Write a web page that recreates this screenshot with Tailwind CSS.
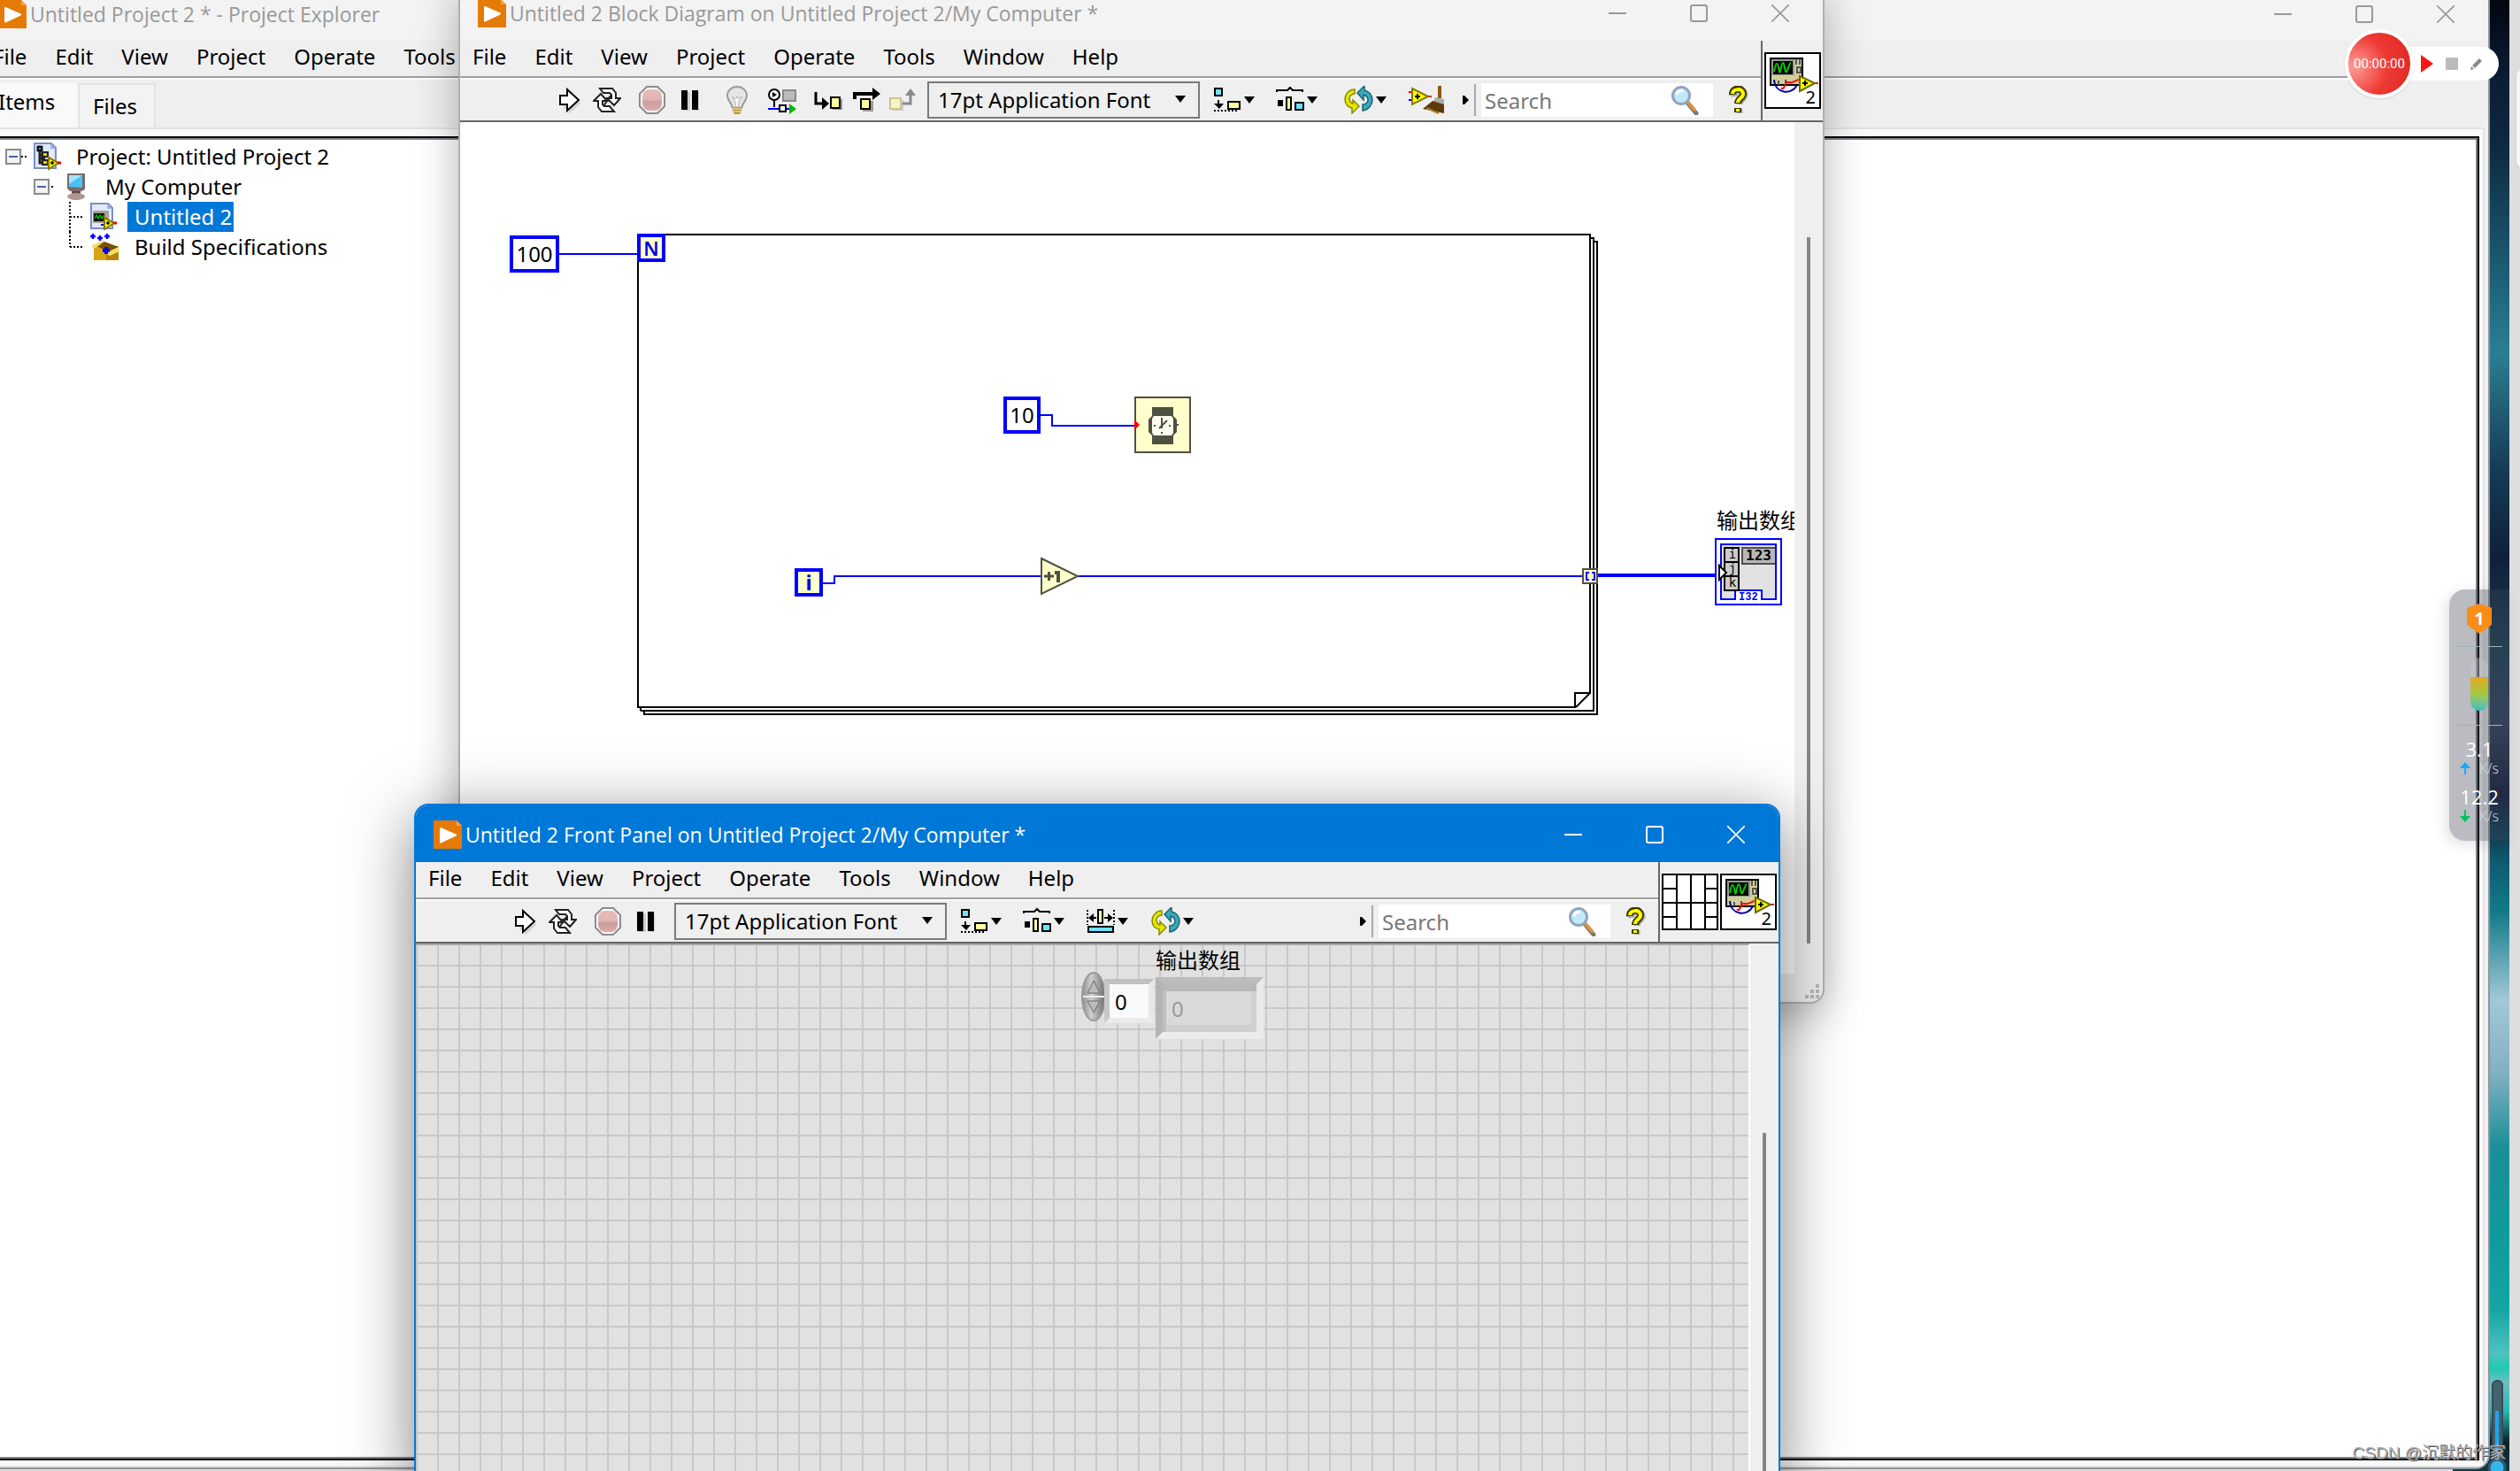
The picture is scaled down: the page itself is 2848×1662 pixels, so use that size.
<!DOCTYPE html>
<html lang="en">
<head>
<meta charset="utf-8">
<meta name="viewport" content="width=device-width, initial-scale=1">
<title>Untitled Project 2</title>
<script src="https://cdn.jsdelivr.net/npm/@tailwindcss/browser@4"></script>
</head>
<body class="relative h-screen overflow-hidden bg-[#dedede] font-['Noto_Sans','Noto_Sans_CJK_SC',sans-serif] text-2xl leading-8 text-black">

<!-- Shared icons -->
<svg class="absolute size-0" aria-hidden="true">
  <symbol id="app" viewBox="0 0 32 32"><path fill="#e67a06" d="M0 0h26l6 6v26H0z"/><path fill="#f4a14b" d="M26 0l6 6h-6z"/><path fill="#fff" stroke="#fff" stroke-width="2" stroke-linejoin="round" d="M8 9l17 7.500-17 8z"/></symbol>
  <symbol id="min" viewBox="0 0 20 20"><path d="M0 10h20" stroke="currentColor" stroke-width="2"/></symbol>
  <symbol id="max" viewBox="0 0 20 20"><rect x="1" y="1" width="18" height="18" rx="2" fill="none" stroke="currentColor" stroke-width="2"/></symbol>
  <symbol id="close" viewBox="0 0 20 20"><path d="M0 0l20 20M20 0L0 20" stroke="currentColor" stroke-width="1.600"/></symbol>
  <symbol id="run" viewBox="0 0 24 32"><path d="M5 14v12h6v6l14-13" fill="#bbb" opacity=".5"/><path d="M1 11h8V4l13 12L9 28v-7H1z" fill="#fff" stroke="#000" stroke-width="2"/></symbol>
  <symbol id="loop" viewBox="0 0 32 32"><g fill="#fff" stroke="#222" stroke-width="2"><path d="M8 3h14l4 5v6h5l-7 8-8-8h5v-4l-2-2H12z"/><path d="M24 29H10l-4-5v-7H1l8-8 7 8h-5v4l2 2h6z"/></g><path d="M12 23l8-12" stroke="#222" stroke-width="2"/></symbol>
  <linearGradient id="sg" x2="0" y2="1"><stop stop-color="#e8b9b9"/><stop offset=".5" stop-color="#e0b5b5"/><stop offset=".55" stop-color="#cc9d9d"/><stop offset="1" stop-color="#dba9a9"/></linearGradient>
  <symbol id="stop" viewBox="0 0 30 32"><path d="M9 1h12l8 8v14l-8 8H9l-8-8V9z" fill="#fff" stroke="#8c8c8c" stroke-width="2"/><rect x="4" y="4" width="22" height="24" rx="8" fill="url(#sg)"/></symbol>
  <symbol id="pause" viewBox="0 0 20 32"><path d="M2 7h8v21H2zM14 7h7v21h-7z" fill="#ccc"/><path d="M0 5h7v22H0zM12 5h7v22h-7z"/></symbol>
  <symbol id="bulb" viewBox="0 0 26 32"><path d="M13 1C6 1 2 6 2 11c0 6 5 8 6 14h10c1-6 6-8 6-14 0-5-4-10-11-10z" fill="#e6e6e6" stroke="#9a9a9a" stroke-width="2"/><path d="M8 12c0 4 3 3 3 8v4h4v-4c0-5 3-4 3-8-2 3-4 3-5 0-1 3-3 3-5 0z" fill="#fafafa" stroke="#aaa"/><path d="M8 24h10v5l-2 3h-6l-2-3z" fill="#b59a3d"/><path d="M8 26h10M8 29h10" stroke="#e9d489" stroke-width="1.500"/></symbol>
  <symbol id="retain" viewBox="0 0 32 32"><circle cx="7" cy="10" r="6" fill="#fff" stroke="#000" stroke-width="2"/><path d="M5 7l5 3-5 3z"/><path d="M7 16v8" stroke="#000" stroke-width="2"/><path d="M17 5h14v12H17z" fill="#bbb" stroke="#888" stroke-width="2"/><path d="M0 26h13M20 26h6" stroke="#00f" stroke-width="2"/><path d="M13 22h7v7h-7z" fill="#fff" stroke="#000" stroke-width="2"/><path d="M24 20l8 6-8 6z" fill="#0b0"/></symbol>
  <symbol id="into" viewBox="0 0 32 32"><path d="M2 7v13h8" fill="none" stroke="#000" stroke-width="3"/><path d="M9 13l8 7-8 7z"/><path d="M21 15h11v12H21z" fill="#999"/><path d="M19 13h10v12H19z" fill="#ffff9e" stroke="#000" stroke-width="2"/></symbol>
  <symbol id="over" viewBox="0 0 32 32"><path d="M2 15V9h22" fill="none" stroke="#000" stroke-width="4"/><path d="M22 2l9 7-9 7z"/><path d="M11 17h12v12H11z" fill="#999"/><path d="M9 15h10v11H9z" fill="#ffff9e" stroke="#000" stroke-width="2"/></symbol>
  <symbol id="out" viewBox="0 0 32 32"><path d="M4 16h13v12H4z" fill="#ccc"/><path d="M2 14h12v12H2z" fill="#f5f5c8" stroke="#c8c88c" stroke-width="2"/><path d="M16 20h9V9" fill="none" stroke="#8a8a8a" stroke-width="3"/><path d="M19 11l6-8 6 8z" fill="#8a8a8a"/></symbol>
  <symbol id="align" viewBox="0 0 46 32"><path d="M1 3h8v8H1z" fill="#6fe0ff" stroke="#000" stroke-width="2"/><path d="M5 16v6" stroke="#000" stroke-width="2"/><path d="M0 20h11l-5 6z"/><path d="M16 18h13v8H16z" fill="#ffffa0" stroke="#000" stroke-width="2"/><path d="M0 28h28" stroke="#000" stroke-width="2" stroke-dasharray="2 2"/><path d="M34 12h12l-6 8z"/></symbol>
  <symbol id="dist" viewBox="0 0 48 32"><path d="M1 7V5h12l3-3 3 3h11v2" fill="none" stroke="#000" stroke-width="2"/><path d="M2 16h6v7H2z"/><path d="M12 13h5v14h-5z" fill="#ffffa0" stroke="#000" stroke-width="2"/><path d="M22 19h9v8h-9z" fill="#6fe0ff" stroke="#000" stroke-width="2"/><path d="M35 12h12l-6 8z"/></symbol>
  <symbol id="resize" viewBox="0 0 48 32"><path d="M1 3v17M31 3v17" stroke="#000" stroke-width="2" stroke-dasharray="2 2"/><path d="M3 12h8M20 12h9" stroke="#000" stroke-width="2"/><path d="M8 7l-6 5 6 5zM24 7l6 5-6 5z"/><path d="M13 3h5v15h-5z" fill="#ffffa0" stroke="#000" stroke-width="2"/><path d="M2 22h28v6H2z" fill="#6fe0ff" stroke="#000" stroke-width="2"/><path d="M35 12h12l-6 8z"/></symbol>
  <symbol id="reorder" viewBox="0 0 50 32"><path d="M13 4C6 4 2 10 2 15c0 5 3 9 8 10v6l8-8-7-7v4c-3-1-4-3-4-6 0-2 2-5 6-5z" fill="#e6e600" stroke="#8a8a00" stroke-width="1.500"/><path d="M22 28c7-1 11-7 11-12 0-6-4-10-9-11V0l-8 8 7 8v-6c3 1 5 3 5 6 0 2-2 5-6 5z" fill="#3aa9b8" stroke="#1b6673" stroke-width="1.500"/><path d="M37 12h12l-6 8z"/></symbol>
  <symbol id="clean" viewBox="0 0 42 32"><path d="M0 7h6M20 12h6" stroke="#f00" stroke-width="2"/><path d="M0 16h5" stroke="#00f" stroke-width="2"/><path d="M4 3l18 9L4 21z" fill="#ff0" stroke="#8a7a00" stroke-width="2"/><path d="M7 12h6M10 9v6" stroke="#000" stroke-width="2"/><path d="M33 0h4v14h-4z" fill="#8a5a10"/><path d="M30 13l10 2v6l-12-3z" fill="#aaa"/><path d="M27 17l13 4v10L16 26z" fill="#5d3a08"/><path d="M20 25l14 6" stroke="#a57a30" stroke-width="2"/></symbol>
  <symbol id="glass" viewBox="0 0 34 34"><path d="M19 20l10 12" stroke="#777" stroke-width="5" stroke-linecap="round"/><path d="M19 19l8 9" stroke="#e0913c" stroke-width="4" stroke-linecap="round"/><circle cx="12" cy="12" r="9.500" fill="#c4e8fb" stroke="#8fa4bd" stroke-width="3"/><path d="M7 11c1-4 4-5 7-5" stroke="#fff" stroke-width="3" fill="none"/></symbol>
  <symbol id="help" viewBox="0 0 22 32"><path d="M6 12C5 4 18 3 18 10c0 5-6 5-6 11M12 26v5" fill="none" stroke="#aaa" stroke-width="7"/><path d="M4 10C3 2 16 1 16 9c0 5-6 5-6 11M10 25v5" fill="none" stroke="#3c3c00" stroke-width="8"/><path d="M4 9C4 3 16 2 16 9c0 5-6 5-6 10M10 26v3" fill="none" stroke="#ff0" stroke-width="4"/></symbol>
  <symbol id="vi" viewBox="0 0 64 64"><path d="M1 1h62v62H1z" fill="#fff" stroke="#000" stroke-width="2"/><path d="M7 7h36v30H7z" fill="#d2cf9a" stroke="#000" stroke-width="2"/><path d="M8 8h26v18H8z" fill="#999"/><path d="M10 10h22v15H10z"/><path d="M11 22c2-12 4-12 6 0 1 4 2-10 4-10s2 12 4 10 3-10 5-10" fill="none" stroke="#0c0" stroke-width="2"/><path d="M36 8v6M40 8v6M37 17h4v6h-4zM16 32v5M24 31v6" fill="none" stroke="#555" stroke-width="2"/><path d="M11 31c1 16 20 18 26 6" fill="none" stroke="#00a" stroke-width="2"/><path d="M19 40c4 5 4-8 8-6s14-5 12-3M55 35h6" fill="none" stroke="#f00" stroke-width="2"/><path d="M40 27l17 8-17 9z" fill="#ff0" stroke="#6b6b00" stroke-width="2"/><path d="M43 35h6M46 32v6" stroke="#000" stroke-width="2"/></symbol>
  <symbol id="expander" viewBox="0 0 18 18"><rect x="1" y="1" width="16" height="16" fill="#f4f4f4" stroke="#8c8c8c" stroke-width="2"/><path d="M4 9h10" stroke="#4a63a8" stroke-width="2"/></symbol>
  <symbol id="sheet" viewBox="0 0 32 32"><path d="M1 1h19l5 5v23H1z" fill="#e3e8fa" stroke="#7a8fc8" stroke-width="2"/><path d="M19 1v6h6" fill="#9db2e6"/></symbol>
</svg>

<!-- Wallpaper strip -->
<div class="absolute inset-y-0 right-3 w-16 bg-[linear-gradient(to_bottom,#02060f_0%,#0a1c33_5%,#0d2a40_10%,#1b5a72_18%,#2b7f93_24%,#163a55_32%,#0e2038_38%,#1d4455_44%,#35455f_49%,#14203d_54%,#0f5f73_59%,#127a88_62%,#a3c8d6_68%,#82b0c2_73%,#1a8f98_78%,#0f9a9d_84%,#14a5a3_89%,#4fc3bf_92%,#20c9b0_93%,#6fbfc4_94%,#25b9ae_96%,#04242c_98%,#123944_100%)]"></div>
<div class="absolute top-[78px] -right-4 h-28 w-5 rounded-lg bg-[#f6f6f6] shadow"></div>

<!-- Project Explorer -->
<main class="absolute -top-5 right-[34px] bottom-[2px] -left-5 flex flex-col overflow-hidden rounded-2xl border-2 border-[#8f959c] bg-[#efefef]">
  <header class="flex h-16 shrink-0 items-center bg-[#f3f3f3] pt-1 pr-[38px] pl-4 text-[#999]">
    <svg class="size-8"><use href="#app"/></svg>
    <h1 class="pl-1 text-[23px] font-normal font-['Open_Sans']">Untitled Project 2 * - Project Explorer</h1>
    <div class="ml-auto flex gap-[72px]">
      <button aria-label="Minimize"><svg class="block size-5"><use href="#min"/></svg></button>
      <button aria-label="Maximize"><svg class="block size-5"><use href="#max"/></svg></button>
      <button aria-label="Close"><svg class="block size-5"><use href="#close"/></svg></button>
    </div>
  </header>
  <nav class="flex h-[42px] shrink-0 items-center gap-8 border-b-2 border-[#a0a0a0] pb-1 pl-2.5">
    <button>File</button><button>Edit</button><button>View</button><button>Project</button><button>Operate</button><button>Tools</button>
  </nav>
  <div class="flex h-[60px] shrink-0 items-start border-t-2 border-white pt-1">
    <button class="h-[54px] w-[106px] bg-[#f9f9f9] pb-3 pl-4 text-left">Items</button>
    <button class="h-[52px] w-[88px] border-2 border-[#e3e3e3] bg-[#f3f3f3] pr-1">Files</button>
  </div>
  <section class="-mt-1 mr-1 flex grow border-t-2 border-r-2 border-b-2 border-[#e3e3e3] bg-[#f9f9f9] pt-2 pr-1 pb-1.5">
    <div class="grow border-2 border-black">
      <ul class="h-full border-2 border-[#80868e] bg-white pt-0.5 pl-3.5 whitespace-nowrap">
        <li class="flex h-[34px] items-center pl-1.5">
          <button aria-label="Collapse project"><svg class="block size-[18px]"><use href="#expander"/></svg></button>
          <svg class="h-2 w-3.5" viewBox="0 0 14 8"><path d="M0 4h8" stroke="#000" stroke-width="2" stroke-dasharray="2 2"/></svg>
          <svg class="mr-4 size-8" viewBox="0 0 32 32"><use href="#sheet"/><path d="M7 8v15h8M7 14h6M7 18h6" fill="none" stroke="#222" stroke-width="3"/><path d="M4 4h6v6H4z" stroke="#222"/><path d="M6 6h2v2H6z" fill="#0cc"/><path d="M10 11h6v5h-6zM10 20h6v5h-6z" fill="#dd0" stroke="#222" stroke-width="2"/><path d="M17 17l11 6-11 7z" fill="#ff0" stroke="#8a7a00" stroke-width="2"/><path d="M19 23h4M21 21v4" stroke="#000" stroke-width="1.500"/><path d="M27 23h4" stroke="#f00" stroke-width="3"/></svg>
          <span>Project: Untitled Project 2</span>
        </li>
        <li class="flex h-[34px] items-center pl-[38px]">
          <button aria-label="Collapse My Computer"><svg class="block size-[18px]"><use href="#expander"/></svg></button>
          <svg class="h-2 w-5" viewBox="0 0 20 8"><path d="M2 4h2" stroke="#000" stroke-width="2"/></svg>
          <svg class="mr-[22px] h-[30px] w-[21px]" viewBox="0 0 21 30"><path d="M0 0h20v18l-4 2H3l-3-3z" fill="#7d6a68"/><path d="M2 2h15v14l-15-1z" fill="#45c4f5"/><path d="M2 2h15L2 12z" fill="#a5e4fb"/><path d="M5 20h10v3H5z" fill="#5c4744"/><ellipse cx="10" cy="26" rx="10" ry="4" fill="#b09490"/></svg>
          <span>My Computer</span>
        </li>
        <li class="flex h-[34px] items-center pl-[78px]">
          <svg class="mr-1 h-[34px] w-5" viewBox="0 0 20 34"><path d="M1 0v34M1 17h16" stroke="#000" stroke-width="2" stroke-dasharray="2 2"/></svg>
          <svg class="mr-2.5 size-8" viewBox="0 0 32 32"><use href="#sheet"/><path d="M3 9h18v14H3z" fill="#a5a293"/><path d="M4 12h12v9H4z"/><path d="M5 18l2-4 2 4 2-4 2 4 2-4" fill="none" stroke="#0b0" stroke-width="1.500"/><path d="M12 25h5" stroke="#00f" stroke-width="2"/><path d="M16 17l11 6-11 7z" fill="#ff0" stroke="#8a7a00" stroke-width="2"/><path d="M18 23h4M20 21v4" stroke="#000" stroke-width="1.500"/><path d="M26 23h4" stroke="#f00" stroke-width="3"/></svg>
          <a href="#" class="flex h-[34px] items-center bg-[#0078d7] pr-0.5 pl-2 text-white">Untitled 2</a>
        </li>
        <li class="flex h-[34px] items-center pl-[78px]">
          <svg class="mr-1 h-[34px] w-5" viewBox="0 0 20 34"><path d="M1 0v17M1 17h16" stroke="#000" stroke-width="2" stroke-dasharray="2 2"/></svg>
          <svg class="mr-4 h-[34px] w-[34px]" viewBox="0 0 34 34"><path d="M3 2v6M0 5h6M11 4v6M8 7h6M19 2v6M16 5h6" stroke="#00f" stroke-width="2.500"/><path d="M4 16h28v16H4z" fill="#d6a516"/><path d="M18 20h14v12H18z" fill="#b58408"/><path d="M7 16l9-5 16 6-10 6z" fill="#7a5200"/><path d="M4 14l12-5-4 5-8 5-3-3zM17 24l15-7 1 5-11 5z" fill="#f5dd6a"/><path d="M18 17v8M14 21h8" stroke="#00f" stroke-width="4"/></svg>
          <span>Build Specifications</span>
        </li>
      </ul>
    </div>
  </section>
</main>

<!-- Block Diagram -->
<section class="absolute -top-5 left-[518px] flex h-[1154px] w-[1544px] flex-col overflow-hidden rounded-2xl border-2 border-[#b0b0b0] bg-[#efefef] shadow-[0_12px_48px_rgba(0,0,0,0.3)]">
  <header class="flex h-16 shrink-0 items-center bg-[#f3f3f3] pt-0.5 pr-[38px] pl-5 text-[#999]">
    <svg class="size-8"><use href="#app"/></svg>
    <h2 class="pl-1 text-[23px] font-['Open_Sans']">Untitled 2 Block Diagram on Untitled Project 2/My Computer *</h2>
    <div class="ml-auto flex gap-[72px]">
      <button aria-label="Minimize"><svg class="block size-5"><use href="#min"/></svg></button>
      <button aria-label="Maximize"><svg class="block size-5"><use href="#max"/></svg></button>
      <button aria-label="Close"><svg class="block size-5"><use href="#close"/></svg></button>
    </div>
  </header>
  <div class="flex h-[92px] shrink-0 border-b-2 border-[#666]">
    <div class="flex grow flex-col">
      <nav class="flex h-[42px] items-center gap-8 border-b-2 border-[#a0a0a0] pb-1 pl-3.5">
        <button>File</button><button>Edit</button><button>View</button><button>Project</button><button>Operate</button><button>Tools</button><button>Window</button><button>Help</button>
      </nav>
      <div class="flex h-12 items-center border-t-2 border-white pr-3.5 pl-28">
        <button aria-label="Run"><svg class="block h-8 w-6"><use href="#run"/></svg></button>
        <button aria-label="Run continuously" class="ml-3.5"><svg class="block size-8"><use href="#loop"/></svg></button>
        <button aria-label="Abort" class="ml-5"><svg class="block h-8 w-[30px]"><use href="#stop"/></svg></button>
        <button aria-label="Pause" class="ml-[18px]"><svg class="block h-8 w-5"><use href="#pause"/></svg></button>
        <button aria-label="Highlight execution" class="ml-[30px]"><svg class="block h-8 w-[26px]"><use href="#bulb"/></svg></button>
        <button aria-label="Retain wire values" class="ml-[22px]"><svg class="block size-8"><use href="#retain"/></svg></button>
        <button aria-label="Step into" class="ml-5"><svg class="block size-8"><use href="#into"/></svg></button>
        <button aria-label="Step over" class="ml-3"><svg class="block size-8"><use href="#over"/></svg></button>
        <button aria-label="Step out" class="ml-2"><svg class="block size-8"><use href="#out"/></svg></button>
        <div class="relative ml-3">
          <select aria-label="Font" class="h-[42px] w-[308px] appearance-none border-2 border-[#7a7a7a] bg-[#efefef] pl-2.5"><option>17pt Application Font</option></select>
          <svg class="pointer-events-none absolute top-4 right-4 h-2 w-3"><path d="M0 0h12L6 8z"/></svg>
        </div>
        <button aria-label="Align objects" class="ml-4"><svg class="block h-8 w-[46px]"><use href="#align"/></svg></button>
        <button aria-label="Distribute objects" class="ml-6"><svg class="block h-8 w-12"><use href="#dist"/></svg></button>
        <button aria-label="Reorder" class="ml-7"><svg class="block h-8 w-[50px]"><use href="#reorder"/></svg></button>
        <button aria-label="Clean up diagram" class="ml-6"><svg class="block h-8 w-[42px]"><use href="#clean"/></svg></button>
        <svg class="ml-auto h-9 w-[18px]"><path d="M1 13h2l5 5-5 5H1z"/><path d="M15 0v36" stroke="#aaa" stroke-width="2"/></svg>
        <label class="relative ml-1"><input type="search" aria-label="Search" placeholder="Search" class="block h-[38px] w-[262px] bg-white pl-1 placeholder:text-[#777]"><svg class="absolute top-0.5 right-3.5 size-[34px]"><use href="#glass"/></svg></label>
        <button aria-label="Context help" class="ml-[18px]"><svg class="block h-8 w-[22px]"><use href="#help"/></svg></button>
      </div>
    </div>
    <div class="relative flex items-center border-l-2 border-[#666] px-0.5"><svg class="size-16"><use href="#vi"/></svg><span class="absolute right-2 bottom-3.5 text-xl leading-6">2</span></div>
  </div>
  <div class="flex grow">
    <div class="relative h-[962px] grow overflow-hidden bg-white">
      <svg class="absolute top-0 left-0 h-[962px] w-[1508px]" viewBox="520 138 1508 962" fill="none" stroke-width="2">
        <path stroke="#000" d="M721 265h1076v518M721 265v534h1060M1780 799v-16h18M1781 799l16-16M1801 268v535H724M724 803v-4M1797 269h5M1805 272v535H728v-4M1801 273h5"/>
        <path stroke="#00f" d="M632 287h90M1176 469h13v12h94M930 659h13v-8h234M1218 651h572"/>
        <path stroke="#00f" stroke-width="4" d="M1806 650h132"/>
        <!-- wait timer -->
        <path fill="#ffc" stroke="#505040" d="M1283 449h62v62h-62z"/>
        <path fill="#505040" d="M1302 460h24v10h-24zM1302 492h24v10h-24z"/>
        <path fill="#505040" d="M1302 470h24l4 4v14l-4 4h-24l-4-4v-14z"/>
        <path fill="#fffff0" d="M1304 470h20l2 3v16l-2 3h-20l-2-3v-16z"/>
        <path stroke="#505040" d="M1313 472v12M1310 484l9-9M1304 481h2M1321 481h2M1312 489h2M1330 480h2"/>
        <path fill="#f00" d="M1282 474l6 6-6 6z"/>
        <!-- increment -->
        <path fill="#ffc" stroke="#505040" d="M1177 631l41 20-41 20z"/>
        <path stroke="#505040" stroke-width="3" d="M1180 651h11M1185.500 646v10"/><path stroke="#505040" stroke-width="4" d="M1192 647h4v11"/>
        <!-- indexing tunnel -->
        <path fill="#ffc" stroke="#505040" d="M1789 643h16v16h-16z"/>
        <path stroke="#00f" d="M1796 647h-3v8h3M1799 647h3v8h-3"/>
        <!-- array terminal -->
        <path fill="#fff" stroke="#00f" d="M1939 609h74v74h-74z"/>
        <path fill="#e1e1e1" stroke="#00f" d="M1945 615h62v62h-62z"/>
        <path fill="#fff" stroke="#00f" d="M1961 678v-11h30v11"/><path fill="#fff" d="M1962 676h28v5h-28z"/>
        <path fill="#ccc" stroke="#000" d="M1949 619h16v48h-16zM1949 635h16M1949 651h16"/>
        <path fill="#b8b8b8" stroke="#505050" d="M2006 619h-37v18h37"/>
        <path fill="#fff" stroke="#000" d="M1943 639v16l8-8z"/>
      </svg>
      <input aria-label="Iterations" value="100" class="absolute top-32 left-14 h-[42px] w-14 border-4 border-[#00f] pb-0.5 text-center">
      <div class="absolute top-[126px] left-[200px] flex size-8 items-center justify-center border-4 border-[#00f] bg-[#ffc] text-[22px] font-semibold text-[#0000e6]">N</div>
      <input aria-label="Wait milliseconds" value="10" class="absolute top-[310px] left-[614px] h-[42px] w-[42px] border-4 border-[#00f] pb-0.5 text-center">
      <div class="absolute top-[504px] left-[378px] flex size-8 items-center justify-center border-4 border-[#00f] bg-[#ffc] text-2xl font-bold text-[#0000e6]">i</div>
      <div class="absolute top-[434px] left-[1420px] text-2xl whitespace-nowrap">输出数组</div>
      <div class="absolute top-[480px] left-[1430px] grid w-4 grid-rows-3 text-center font-['DejaVu_Sans_Mono'] text-sm leading-4"><span>i</span><span>j</span><span>k</span></div>
      <div class="absolute top-[482px] left-[1453px] font-['DejaVu_Sans_Mono'] text-base leading-4 font-bold">123</div>
      <div class="absolute top-[529px] left-[1445px] font-['Liberation_Mono'] text-xs leading-4 font-bold text-[#00f]">I32</div>
    </div>
    <div class="flex w-8 justify-center pt-[130px]"><div class="h-[798px] w-1 bg-[#858585]"></div></div>
  </div>
  <footer class="flex h-8 shrink-0 items-end justify-end pr-1"><svg class="mb-1 size-4" fill="#b8b8b8"><path d="M0 12h4v4H0zM6 12h4v4H6zM12 12h4v4h-4zM6 6h4v4H6zM12 6h4v4h-4zM12 0h4v4h-4z"/></svg></footer>
</section>

<!-- Front Panel -->
<section class="absolute top-[908px] -bottom-4 left-[468px] flex w-[1544px] flex-col overflow-hidden rounded-2xl border-2 border-[#0078d7] bg-[#efefef] shadow-[0_16px_72px_rgba(0,0,0,0.5)]">
  <header class="flex h-16 shrink-0 items-center bg-[#0078d7] pt-0.5 pr-[38px] pl-5 text-white">
    <svg class="size-8"><use href="#app"/></svg>
    <h2 class="pl-1 text-[23px] font-['Open_Sans']">Untitled 2 Front Panel on Untitled Project 2/My Computer *</h2>
    <div class="ml-auto flex gap-[72px]">
      <button aria-label="Minimize"><svg class="block size-5"><use href="#min"/></svg></button>
      <button aria-label="Maximize"><svg class="block size-5"><use href="#max"/></svg></button>
      <button aria-label="Close"><svg class="block size-5"><use href="#close"/></svg></button>
    </div>
  </header>
  <div class="flex h-[92px] shrink-0 border-b-2 border-[#666]">
    <div class="flex grow flex-col">
      <nav class="flex h-[42px] items-center gap-8 border-b-2 border-[#a0a0a0] pb-1 pl-3.5">
        <button>File</button><button>Edit</button><button>View</button><button>Project</button><button>Operate</button><button>Tools</button><button>Window</button><button>Help</button>
      </nav>
      <div class="flex h-12 items-center border-t-2 border-white pr-3.5 pl-28">
        <button aria-label="Run"><svg class="block h-8 w-6"><use href="#run"/></svg></button>
        <button aria-label="Run continuously" class="ml-3.5"><svg class="block size-8"><use href="#loop"/></svg></button>
        <button aria-label="Abort" class="ml-5"><svg class="block h-8 w-[30px]"><use href="#stop"/></svg></button>
        <button aria-label="Pause" class="ml-[18px]"><svg class="block h-8 w-5"><use href="#pause"/></svg></button>
        <div class="relative ml-[22px]">
          <select aria-label="Font" class="h-[42px] w-[308px] appearance-none border-2 border-[#7a7a7a] bg-[#efefef] pl-2.5"><option>17pt Application Font</option></select>
          <svg class="pointer-events-none absolute top-4 right-4 h-2 w-3"><path d="M0 0h12L6 8z"/></svg>
        </div>
        <button aria-label="Align objects" class="ml-4"><svg class="block h-8 w-[46px]"><use href="#align"/></svg></button>
        <button aria-label="Distribute objects" class="ml-6"><svg class="block h-8 w-12"><use href="#dist"/></svg></button>
        <button aria-label="Resize objects" class="ml-6"><svg class="block h-8 w-12"><use href="#resize"/></svg></button>
        <button aria-label="Reorder" class="ml-6"><svg class="block h-8 w-[50px]"><use href="#reorder"/></svg></button>
        <svg class="ml-auto h-9 w-[18px]"><path d="M1 13h2l5 5-5 5H1z"/><path d="M15 0v36" stroke="#aaa" stroke-width="2"/></svg>
        <label class="relative ml-1"><input type="search" aria-label="Search" placeholder="Search" class="block h-[38px] w-[262px] bg-white pl-1 placeholder:text-[#777]"><svg class="absolute top-0.5 right-3.5 size-[34px]"><use href="#glass"/></svg></label>
        <button aria-label="Context help" class="ml-[18px]"><svg class="block h-8 w-[22px]"><use href="#help"/></svg></button>
      </div>
    </div>
    <div class="relative flex items-center gap-0.5 border-l-2 border-[#666] px-0.5">
      <svg class="size-16" viewBox="0 0 64 64" fill="#fff" stroke="#000" stroke-width="2"><path d="M1 1h62v62H1zM17 1v62M33 1v62M49 1v62M1 33h62M1 17h16M49 17h14M1 49h16M49 49h14"/></svg>
      <svg class="size-16"><use href="#vi"/></svg>
      <span class="absolute right-2 bottom-3.5 text-xl leading-6">2</span>
    </div>
  </div>
  <div class="flex grow">
    <div class="relative grow border-t-2 border-r-2 border-t-[#a9a9a9] border-r-white bg-[#e1e1e1] bg-[linear-gradient(to_right,transparent_22px,#c8c8c8_22px),linear-gradient(to_bottom,transparent_22px,#c8c8c8_22px)] bg-size-[24px_24px] bg-position-[2px_0px]">
      <div class="absolute top-px left-[836px]">输出数组</div>
      <svg class="absolute top-[30px] left-[752px] h-14 w-7" viewBox="0 0 28 56"><defs><linearGradient id="eg"><stop stop-color="#8c8c8c"/><stop offset=".4" stop-color="#d0d0d0"/><stop offset="1" stop-color="#6e6e6e"/></linearGradient></defs><ellipse cx="14" cy="28" rx="13" ry="27" fill="url(#eg)" stroke="#999" stroke-width="2"/><path d="M2 28h24" stroke="#eee" stroke-width="2"/><path d="M7 24l7-14 7 14zM7 33h14l-7 13z" fill="#bbb" stroke="#6a6a6a"/></svg>
      <input aria-label="Array index" value="0" class="absolute top-[38px] left-[778px] h-[50px] w-[56px] border-6 border-t-[#c0c0c0] border-r-[#e8e8e8] border-b-[#ebebeb] border-l-[#c8c8c8] bg-[#fafafa] pl-1.5">
      <input aria-label="Element 0" value="0" disabled class="absolute top-9 left-[836px] h-[70px] w-[122px] border-8 border-t-[#bcbcbc] border-r-[#eaeaea] border-b-[#ececec] border-l-[#b4b4b4] bg-[#d9d9d9] pl-2.5 text-[#9a9a9a] shadow-[inset_0_8px_0_#b8b8b8,inset_4px_0_0_#bebebe,inset_-6px_0_0_#d0d0d0,inset_0_-8px_0_#cecece]">
    </div>
    <div class="flex w-8 justify-center pt-[214px]"><div class="w-1 bg-[#858585]"></div></div>
  </div>
</section>

<!-- Screen recorder -->
<aside class="absolute top-[33px] right-6 flex items-center">
  <button class="z-10 flex size-[78px] items-center justify-center rounded-full border-4 border-white bg-[radial-gradient(circle_at_10%_55%,#ff9d95,#ee3a34_50%,#dc2522)] font-['Roboto'] text-[15px] text-white shadow-sm">00:00:00</button>
  <div class="-ml-4 flex h-[38px] items-center gap-[14px] rounded-r-full bg-white pr-[18px] pl-6">
    <button aria-label="Record"><svg class="block h-5 w-3.5"><path d="M0 0l14 10L0 20z" fill="#ff1414"/></svg></button>
    <button aria-label="Stop recording"><svg class="block size-3.5"><rect width="14" height="14" rx="1" fill="#bbb"/></svg></button>
    <button aria-label="Annotate"><svg class="block size-3.5" fill="#8a8a8a"><path d="M0 14l1-4 3 3zM2 9l8-8 3 3-8 8z"/></svg></button>
  </div>
</aside>

<!-- Network monitor -->
<aside class="absolute top-[666px] right-3 flex h-[284px] w-[68px] flex-col items-center rounded-l-[18px] bg-[#38404c]/35 pt-4 font-['Open_Sans'] text-white shadow-[-4px_4px_16px_rgba(0,0,0,0.12)]">
  <div class="flex h-[34px] w-7 items-center justify-center bg-[#fb8c14] text-xl font-bold [clip-path:polygon(50%_0,100%_14%,100%_70%,50%_100%,0_70%,0_14%)]">1</div>
  <div class="mt-3.5 h-px w-[52px] bg-[#a3b1b6]"></div>
  <div class="mt-3 flex h-[60px] w-5 items-end overflow-hidden rounded-full bg-[#c9c9cb]/40"><div class="h-[38px] w-5 bg-linear-to-b from-[#e0a824] via-[#a3c83c] to-[#35bcc0]"></div></div>
  <div class="mt-4 mb-3 h-px w-[52px] bg-[#a3b1b6]"></div>
  <div class="text-[22px] leading-7">3.1</div>
  <div class="flex w-[44px] items-center justify-between text-base leading-4 font-light text-[#d5d9df]"><svg class="h-3.5 w-3"><path d="M6 0l6 7H7v7H5V7H0z" fill="#1aa7ff"/></svg>K/s</div>
  <div class="mt-2.5 text-[22px] leading-7">12.2</div>
  <div class="flex w-[44px] items-center justify-between text-base leading-4 font-light text-[#d5d9df]"><svg class="h-3.5 w-3"><path d="M6 14l6-7H7V0H5v7H0z" fill="#07c160"/></svg>K/s</div>
</aside>

<!-- Thermometer -->
<svg class="absolute right-3.5 bottom-0 h-[104px] w-6" viewBox="0 0 24 104"><rect x="7" y="2" width="11" height="120" rx="5" fill="#44636d" stroke="#3a4a57" stroke-width="2"/><path d="M10 36h4v60h-4z" fill="#1ea4f0"/><circle cx="12" cy="100" r="9" fill="#35b5ee" stroke="#36566a" stroke-width="3"/></svg>

<div class="absolute right-4 bottom-1 font-['Liberation_Sans','Noto_Sans_CJK_SC'] text-[19px] text-[#b5b5b5] text-shadow-[1px_1px_0_#555]">CSDN @沉默的作家</div>
</body>
</html>
